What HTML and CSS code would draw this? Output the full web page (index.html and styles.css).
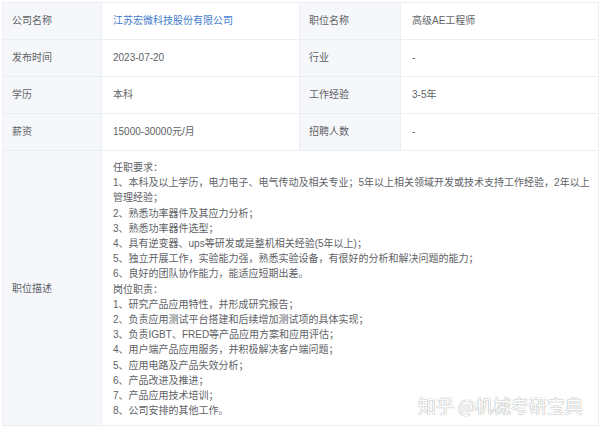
FILE: index.html
```html
<!DOCTYPE html>
<html>

<head>
    <title>职位详情</title>
    <link rel="stylesheet" href="styles.css">
</head>

<body>
    <div class="page">
        <table class="desc-table">
            <colgroup>
                <col class="col-label">
                <col class="col-value">
                <col class="col-label2">
                <col class="col-value2">
            </colgroup>
            <tbody>
                <tr>
                    <td class="label">公司名称</td>
                    <td class="value"><a class="company-link" href="#">江苏宏微科技股份有限公司</a></td>
                    <td class="label">职位名称</td>
                    <td class="value">高级AE工程师</td>
                </tr>
                <tr>
                    <td class="label">发布时间</td>
                    <td class="value">2023-07-20</td>
                    <td class="label">行业</td>
                    <td class="value">-</td>
                </tr>
                <tr>
                    <td class="label">学历</td>
                    <td class="value">本科</td>
                    <td class="label">工作经验</td>
                    <td class="value">3-5年</td>
                </tr>
                <tr>
                    <td class="label">薪资</td>
                    <td class="value">15000-30000元/月</td>
                    <td class="label">招聘人数</td>
                    <td class="value">-</td>
                </tr>
                <tr>
                    <td class="label">职位描述</td>
                    <td class="value description" colspan="3">
                        任职要求：<br>
                        1、本科及以上学历，电力电子、电气传动及相关专业；5年以上相关领域开发或技术支持工作经验，2年以上管理经验；<br>
                        2、熟悉功率器件及其应力分析；<br>
                        3、熟悉功率器件选型；<br>
                        4、具有逆变器、ups等研发或是整机相关经验(5年以上)；<br>
                        5、独立开展工作，实验能力强，熟悉实验设备，有很好的分析和解决问题的能力；<br>
                        6、良好的团队协作能力，能适应短期出差。<br>
                        岗位职责：<br>
                        1、研究产品应用特性，并形成研究报告；<br>
                        2、负责应用测试平台搭建和后续增加测试项的具体实现；<br>
                        3、负责IGBT、FRED等产品应用方案和应用评估；<br>
                        4、用户端产品应用服务，并积极解决客户端问题；<br>
                        5、应用电路及产品失效分析；<br>
                        6、产品改进及推进；<br>
                        7、产品应用技术培训；<br>
                        8、公司安排的其他工作。
                    </td>
                </tr>
            </tbody>
        </table>
        <div class="watermark">知乎 @机械考研宝典</div>
    </div>
</body>

</html>
```

FILE: styles.css
```css
body {
    margin: 0;
    padding: 0;
    background-color: #fff;
    font-family: "Liberation Sans", "Noto Sans CJK SC", sans-serif;
    font-size: 10px;
    color: #606266;
}

.page {
    position: relative;
    width: 600px;
    height: 432px;
    padding: 2px 0 0 2px;
    box-sizing: border-box;
}

.desc-table {
    width: 596px;
    table-layout: fixed;
    border-collapse: collapse;
}

.col-label {
    width: 99px;
}

.col-value {
    width: 198px;
}

.col-label2 {
    width: 101px;
}

.col-value2 {
    width: 198px;
}

.desc-table td {
    border: 1px solid #ebeef5;
    height: 36px;
    padding: 0 10px;
    vertical-align: middle;
    line-height: 15.2px;
}

.desc-table td.label {
    background-color: #f5f7fa;
    padding-left: 9px;
}

.desc-table td.value {
    padding-left: 11px;
}

.company-link {
    color: #3f7ccc;
    text-decoration: none;
}

.desc-table td.description {
    padding: 9px 6px 7px 11px;
    vertical-align: top;
}

/* zhihu watermark sits over the table */
.watermark {
    position: absolute;
    left: 418px;
    top: 393px;
    font-family: "Noto Sans CJK SC", sans-serif;
    font-size: 18px;
    line-height: 24px;
    color: #fff;
    text-shadow: 0 0 1px #a8a8a8, 0 0 1px #a8a8a8;
    white-space: nowrap;
}
```
